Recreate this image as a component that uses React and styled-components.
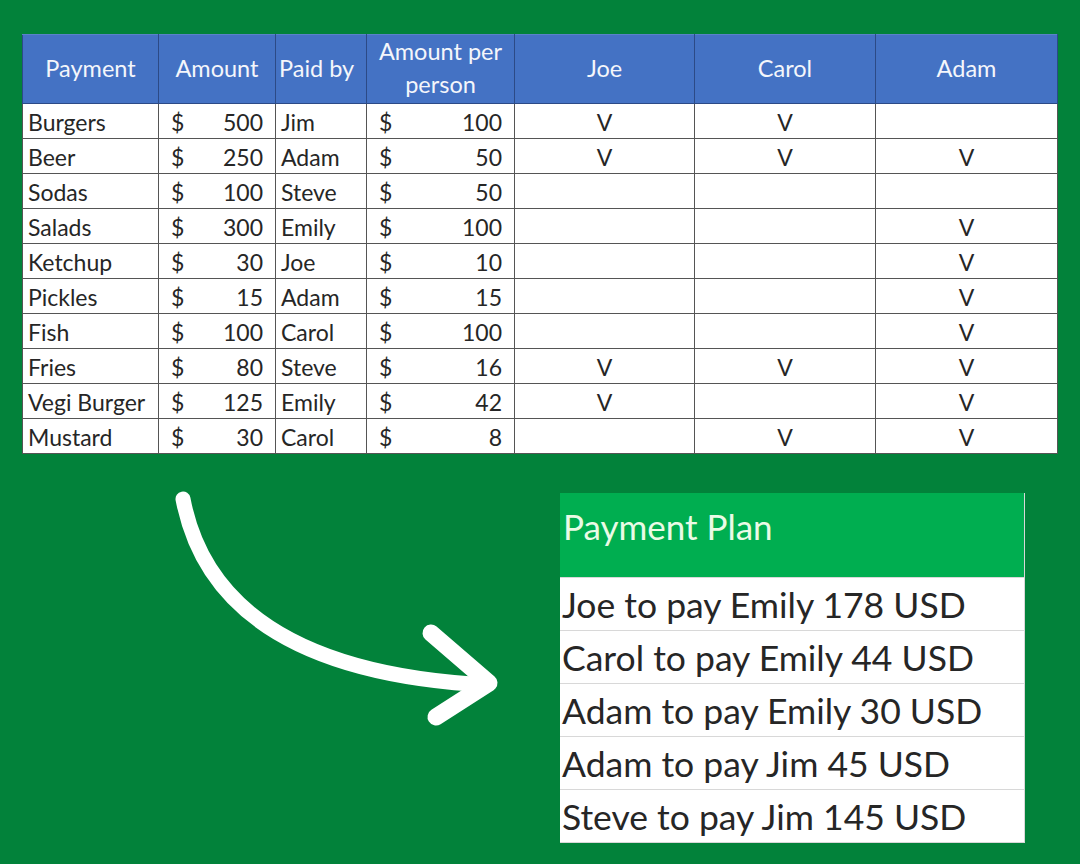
import React from 'react'
import styled, { createGlobalStyle } from 'styled-components'

const GlobalStyle = createGlobalStyle`
  body {
    margin: 0;
    background: #02823a;
    font-family: Lato, 'Open Sans', sans-serif;
  }
`

const Page = styled.div`
  width: 1080px;
  height: 864px;
  background: #02823a;
  padding: 34px 0 0 22px;
  box-sizing: border-box;
  overflow: hidden;
`

const Sheet = styled.table`
  width: 1035px;
  border-collapse: collapse;
  table-layout: fixed;
  background: #fff;
  font-size: 23px;
  color: #262626;
`

const HeadCell = styled.th`
  height: 66px;
  padding: 0 3px 2px;
  background: #4472c4;
  color: #f4f6fb;
  font-weight: 400;
  font-size: 23.5px;
  line-height: 33px;
  text-align: ${(p) => p.$align || 'center'};
  border: 1px solid #2c4a86;
  border-top-color: #5a82c8;
  white-space: nowrap;
`

const Cell = styled.td`
  height: 32px;
  padding: 2px 5px 0;
  line-height: 32px;
  text-align: ${(p) => p.$align || 'left'};
  border: 1px solid #555;
  border-left-color: ${(p) => (p.$soft ? '#cfcfcf' : '#555')};
  white-space: nowrap;
  overflow: hidden;
`

const MoneyCell = styled(Cell)`
  padding: 2px 0 0;
`

const Money = styled.div`
  display: flex;
  justify-content: space-between;
  padding: 0 ${(p) => p.$pad}px;
`

const Lower = styled.div`
  display: flex;
  align-items: flex-start;
`

const Arrow = styled.svg`
  width: 538px;
  height: 290px;
  flex: none;
  display: block;
`

const Plan = styled.div`
  margin-top: 39px;
  width: 464px;
  background: #fff;
  border-right: 1px solid #d8d8d8;
`

const PlanHead = styled.div`
  height: 84px;
  background: #00ae50;
  color: #eafbe6;
  font-size: 35px;
  line-height: 66px;
  padding-left: 3px;
  border-bottom: 1px solid #d8d8d8;
`

const PlanRow = styled.div`
  height: 52px;
  font-size: 35.5px;
  line-height: 54px;
  color: #262626;
  padding-left: 2px;
  border-bottom: 1px solid #d8d8d8;
  white-space: nowrap;
`

const rows = [
  ['Burgers', 500, 'Jim', 100, true, true, false],
  ['Beer', 250, 'Adam', 50, true, true, true],
  ['Sodas', 100, 'Steve', 50, false, false, false],
  ['Salads', 300, 'Emily', 100, false, false, true],
  ['Ketchup', 30, 'Joe', 10, false, false, true],
  ['Pickles', 15, 'Adam', 15, false, false, true],
  ['Fish', 100, 'Carol', 100, false, false, true],
  ['Fries', 80, 'Steve', 16, true, true, true],
  ['Vegi Burger', 125, 'Emily', 42, true, false, true],
  ['Mustard', 30, 'Carol', 8, false, true, true],
]

const plan = [
  'Joe to pay Emily 178 USD',
  'Carol to pay Emily 44 USD',
  'Adam to pay Emily 30 USD',
  'Adam to pay Jim 45 USD',
  'Steve to pay Jim 145 USD',
]

const App = () => {
  return (
    <>
      <GlobalStyle />
      <Page>
        <Sheet>
          <colgroup>
            <col style={{ width: 136 }} />
            <col style={{ width: 117 }} />
            <col style={{ width: 91 }} />
            <col style={{ width: 148 }} />
            <col style={{ width: 180 }} />
            <col style={{ width: 181 }} />
            <col style={{ width: 182 }} />
          </colgroup>
          <thead>
            <tr>
              <HeadCell>Payment</HeadCell>
              <HeadCell>Amount</HeadCell>
              <HeadCell $align='left'>Paid by</HeadCell>
              <HeadCell>Amount per<br />person</HeadCell>
              <HeadCell>Joe</HeadCell>
              <HeadCell>Carol</HeadCell>
              <HeadCell>Adam</HeadCell>
            </tr>
          </thead>
          <tbody>
            {rows.map(([item, amount, payer, share, joe, carol, adam]) => (
              <tr key={item}>
                <Cell>{item}</Cell>
                <MoneyCell>
                  <Money $pad={12}><span>$</span><span>{amount}</span></Money>
                </MoneyCell>
                <Cell>{payer}</Cell>
                <MoneyCell>
                  <Money $pad={12}><span>$</span><span>{share}</span></Money>
                </MoneyCell>
                <Cell $align='center' $soft>{joe ? 'V' : ''}</Cell>
                <Cell $align='center'>{carol ? 'V' : ''}</Cell>
                <Cell $align='center'>{adam ? 'V' : ''}</Cell>
              </tr>
            ))}
          </tbody>
        </Sheet>
        <Lower>
          <Arrow viewBox='22 453 538 290'>
            <path
              d='M183 498 Q215 665 472 683'
              fill='none'
              stroke='#fff'
              strokeWidth='15'
              strokeLinecap='round'
            />
            <path
              d='M431 632 L489 682 L436 716'
              fill='none'
              stroke='#fff'
              strokeWidth='17'
              strokeLinecap='round'
              strokeLinejoin='round'
            />
          </Arrow>
          <Plan>
            <PlanHead>Payment Plan</PlanHead>
            {plan.map((line) => (
              <PlanRow key={line}>{line}</PlanRow>
            ))}
          </Plan>
        </Lower>
      </Page>
    </>
  )
}

export default App
